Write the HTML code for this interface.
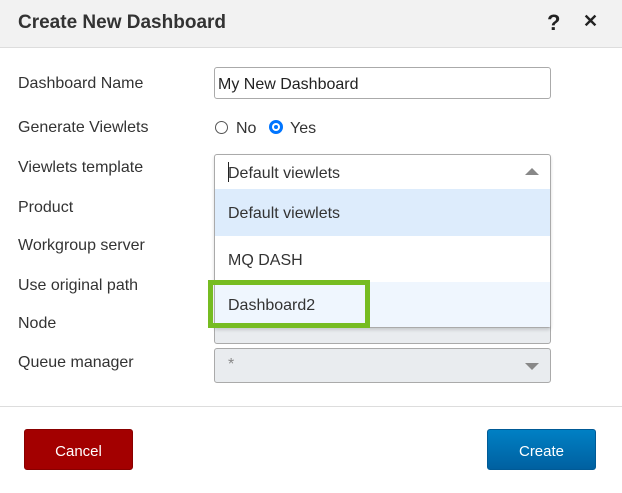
<!DOCTYPE html>
<html><head><style>
body{margin:0;width:622px;height:493px;background:#fff;font-family:"Liberation Sans",sans-serif;color:#333;position:relative;overflow:hidden}
.hdr{position:absolute;left:0;top:0;width:622px;height:47px;background:#f2f2f2;border-bottom:1px solid #ddd}
.t{position:absolute;left:18px;top:12px;font-size:19px;font-weight:bold;color:#333}
.lbl{position:absolute;left:18px;font-size:16px;color:#333;line-height:20px}
.box{position:absolute;left:214px;width:337px;border:1px solid #aaa;border-radius:3px;background:#fff;box-sizing:border-box}
.dis{background:#e9ecef;border-color:#aaa}
.txt{position:absolute;font-size:16px;line-height:20px}
.btn{position:absolute;top:429px;width:109px;height:41px;border-radius:3px;color:#fff;font-size:15px;text-align:center;line-height:41px;box-sizing:border-box;line-height:43px}
</style></head><body>
<div class="hdr"><div class="t">Create New Dashboard</div>
<div style="position:absolute;left:547px;top:10px;font-size:22px;font-weight:bold;color:#222">?</div>
<div style="position:absolute;left:583px;top:11px;font-size:18px;font-weight:bold;color:#222">✕</div></div>
<div class="lbl" style="top:74px">Dashboard Name</div>
<div class="lbl" style="top:118px">Generate Viewlets</div>
<div class="lbl" style="top:158px">Viewlets template</div>
<div class="lbl" style="top:198px">Product</div>
<div class="lbl" style="top:236px">Workgroup server</div>
<div class="lbl" style="top:276px">Use original path</div>
<div class="lbl" style="top:314px">Node</div>
<div class="lbl" style="top:353px">Queue manager</div>
<div class="box" style="top:67px;height:32px"></div>
<div class="txt" style="left:218px;top:75px;color:#222">My New Dashboard</div>
<div style="position:absolute;left:215px;top:121px;width:13px;height:13px;border:1px solid #555;border-radius:50%;box-sizing:border-box"></div>
<div class="txt" style="left:236px;top:119px">No</div>
<div style="position:absolute;left:269px;top:120px;width:14px;height:14px;border-radius:50%;background:#0075ff;box-sizing:border-box;border:3px solid #0075ff"><div style="width:8px;height:8px;border-radius:50%;background:#0075ff;box-shadow:0 0 0 2px #fff inset"></div></div>
<div class="txt" style="left:290px;top:119px">Yes</div>
<div class="box dis" style="top:300px;height:44px"></div>
<div class="box dis" style="top:348px;height:35px"></div>
<div class="txt" style="left:228px;top:355px;color:#888">*</div>
<div style="position:absolute;left:525px;top:363px;width:0;height:0;border-left:7px solid transparent;border-right:7px solid transparent;border-top:7px solid #888"></div>
<div class="box" style="top:154px;height:174px;box-shadow:0 2px 3px rgba(0,0,0,.15)"></div>
<div style="position:absolute;left:228px;top:162px;width:1px;height:20px;background:#222"></div>
<div class="txt" style="left:228px;top:164px">Default viewlets</div>
<div style="position:absolute;left:525px;top:168px;width:0;height:0;border-left:7px solid transparent;border-right:7px solid transparent;border-bottom:7px solid #888"></div>
<div style="position:absolute;left:215px;top:189px;width:335px;height:47px;background:#ddecfc"></div>
<div class="txt" style="left:228px;top:204px">Default viewlets</div>
<div class="txt" style="left:228px;top:251px">MQ DASH</div>
<div style="position:absolute;left:215px;top:282px;width:335px;height:45px;background:#eff6fe"></div>
<div class="txt" style="left:228px;top:296px">Dashboard2</div>
<div style="position:absolute;left:208px;top:280px;width:162px;height:48px;border:5px solid #76bc21;box-sizing:border-box"></div>
<div style="position:absolute;left:0;top:406px;width:622px;height:1px;background:#ddd"></div>
<div class="btn" style="left:24px;background:#a30000;border:1px solid #800">Cancel</div>
<div class="btn" style="left:487px;background:linear-gradient(#0080c4,#0060a0);border:1px solid #005a96">Create</div>
</body></html>
